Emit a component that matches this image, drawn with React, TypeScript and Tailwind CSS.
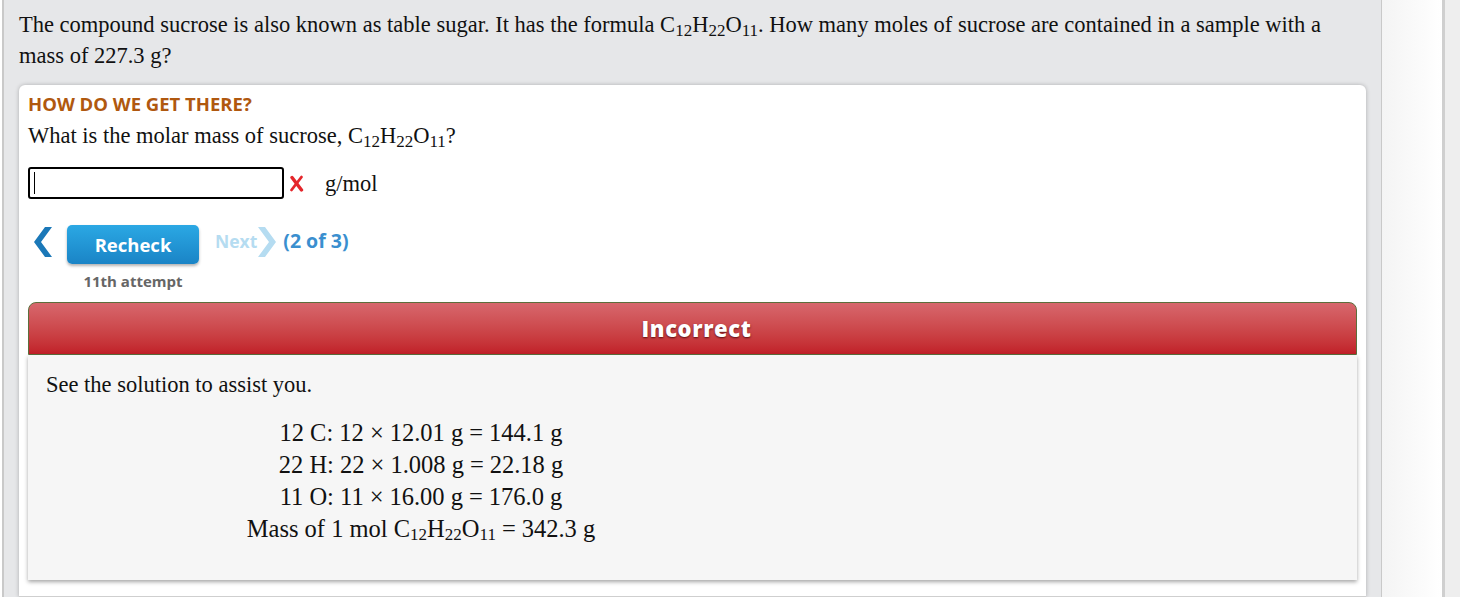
import React from "react";

const serif = { fontFamily: '"Liberation Serif", "Times New Roman", serif' };
const sans = { fontFamily: '"Open Sans", "Liberation Sans", Arial, sans-serif' };

function Chevron({ color, flip }: { color: string; flip?: boolean }) {
  return (
    <svg width="18" height="30" viewBox="0 0 18 30" style={flip ? { transform: "scaleX(-1)" } : undefined}>
      <polygon points="11,0 18,0 7,15 18,30 11,30 0,15" fill={color} />
    </svg>
  );
}

function RedX() {
  return (
    <svg width="15" height="17" viewBox="0 0 15 17">
      <path d="M3 2.5 L12.5 15" stroke="#e4262b" strokeWidth="3.4" strokeLinecap="round" />
      <path d="M12.5 2 L2.5 15" stroke="#e4262b" strokeWidth="2.8" strokeLinecap="round" />
    </svg>
  );
}

function Formula() {
  return (
    <span>
      C<sub className="relative top-[4px] align-baseline text-[17px]">12</sub>H
      <sub className="relative top-[4px] align-baseline text-[17px]">22</sub>O
      <sub className="relative top-[4px] align-baseline text-[17px]">11</sub>
    </span>
  );
}

export default function App() {
  return (
    <div className="flex h-[597px] w-[1460px] overflow-hidden bg-white">
      <div className="w-[2px] bg-white" />
      <div className="flex w-[1380px] flex-col border-l-2 border-r border-[#c9c9c9] bg-[#e6e7e9] px-[15px] pt-[9px]">
        <p className="text-[22.5px] leading-[31px] text-[#111]" style={serif}>
          The compound sucrose is also known as table sugar. It has the formula <Formula />. How many moles of sucrose are
          contained in a sample with a mass of 227.3 g?
        </p>
        <div className="mt-[14px] flex flex-1 flex-col rounded-t-[6px] border-b border-[#cfcfcf] bg-white px-[9px] pt-[8px] shadow-[0_0_4px_rgba(0,0,0,0.25)]">
          <div className="text-[18.5px] font-bold leading-[22px] text-[#b0580f]" style={sans}>
            HOW DO WE GET THERE?
          </div>
          <div className="mt-[5px] text-[22.5px] leading-[31px] text-[#111]" style={serif}>
            What is the molar mass of sucrose, <Formula />?
          </div>
          <div className="mt-[16px] flex items-center">
            <div className="flex h-[32px] w-[256px] items-center rounded-[3px] border-2 border-black bg-white pl-[4px]">
              <span className="h-[22px] w-px bg-black" />
            </div>
            <span className="ml-[5px] mt-[1px]">
              <RedX />
            </span>
            <span className="ml-[21px] text-[22.5px] leading-[31px] text-[#111]" style={serif}>
              g/mol
            </span>
          </div>
          <div className="mt-[26px] flex items-start">
            <div className="ml-[6px] mt-[2px]">
              <Chevron color="#1b78b8" />
            </div>
            <div className="ml-[15px] flex flex-col items-center">
              <button
                className="flex h-[39px] w-[132px] items-center justify-center rounded-[5px] bg-gradient-to-b from-[#2ba8e4] to-[#1a84c6] text-[18.5px] font-bold text-white shadow-[0_2px_3px_rgba(0,0,0,0.3)]"
                style={sans}
              >
                Recheck
              </button>
              <div className="mt-[8px] text-[15px] font-bold leading-[18px] text-[#666]" style={sans}>
                11th attempt
              </div>
            </div>
            <div className="ml-[16px] flex items-center" style={sans}>
              <span className="text-[17.5px] font-bold leading-[30px] text-[#b5dcf1]">Next</span>
              <span className="ml-[1px] mt-[2px]">
                <Chevron color="#b5dcf1" flip />
              </span>
              <span className="ml-[7px] text-[19.5px] font-bold leading-[30px] text-[#3a8fcf]">(2 of 3)</span>
            </div>
          </div>
          <div className="mt-[12px] flex h-[53px] items-center justify-center rounded-t-[8px] border border-[#5c6e3c] bg-gradient-to-b from-[#d7676d] to-[#c11f28] pl-[8px]">
            <span
              className="text-[22px] font-extrabold tracking-[0.6px] text-white [text-shadow:0_1px_2px_rgba(60,0,0,0.8)]"
              style={sans}
            >
              Incorrect
            </span>
          </div>
          <div className="flex h-[225px] flex-col bg-[#f6f6f6] px-[18px] pt-[14px] shadow-[0_2px_4px_rgba(0,0,0,0.35)]">
            <div className="text-[22.5px] leading-[31px] text-[#111]" style={serif}>
              See the solution to assist you.
            </div>
            <div
              className="mt-[17px] flex w-[750px] flex-col items-center text-[24.5px] leading-[32px] text-[#111]"
              style={serif}
            >
              <div>
                12 C: 12<span className="mx-[6px]">×</span>12.01 g<span className="mx-[6px]">=</span>144.1 g
              </div>
              <div>
                22 H: 22<span className="mx-[6px]">×</span>1.008 g<span className="mx-[6px]">=</span>22.18 g
              </div>
              <div>
                11 O: 11<span className="mx-[6px]">×</span>16.00 g<span className="mx-[6px]">=</span>176.0 g
              </div>
              <div>
                Mass of 1 mol C<sub className="relative top-[3px] align-baseline text-[17px]">12</sub>H
                <sub className="relative top-[3px] align-baseline text-[17px]">22</sub>O
                <sub className="relative top-[3px] align-baseline text-[17px]">11</sub>
                <span className="mx-[6px]">=</span>342.3 g
              </div>
            </div>
          </div>
          <div className="flex-1" />
        </div>
      </div>
      <div className="w-[60px] bg-gradient-to-r from-[#f4f4f4] to-white" />
      <div className="flex-1 border-l-[3px] border-[#cfcfcf] bg-[#eeeeee]" />
    </div>
  );
}
